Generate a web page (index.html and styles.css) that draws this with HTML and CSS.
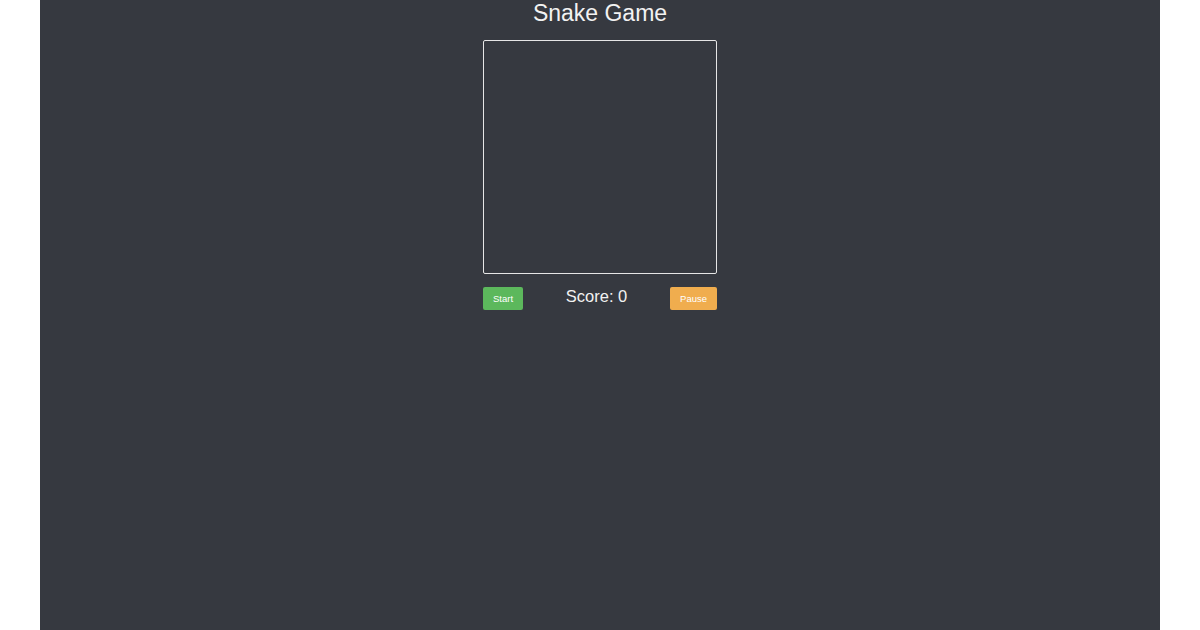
FILE: index.html
```html
<!DOCTYPE html>
<html lang="en">
<head>
  <title>Snake Game</title>
  <meta charset="UTF-8">
  <link rel="stylesheet" href="styles.css">
</head>
<body>
  <div class="game">
    <h1 class="game-title">Snake Game</h1>
    <div class="board">
      <canvas id="board" width="232" height="232"></canvas>
      <div class="controls">
        <button id="startButton" class="btn btn-start">Start</button>
        <span class="score">Score: <span id="score">0</span></span>
        <button id="pauseButton" class="btn btn-pause">Pause</button>
      </div>
    </div>
  </div>
</body>
</html>
```

FILE: styles.css
```css
body {
  margin: 0;
  background-color: #fff;
  font-family: "Liberation Sans", Arial, sans-serif;
}

.game {
  margin: 0 40px;
  min-height: 100vh;
  background-color: #363940;
  display: flex;
  flex-direction: column;
  align-items: center;
}

.game-title {
  margin: 0;
  font-size: 23px;
  font-weight: normal;
  line-height: 26px;
  color: #f2f2f2;
}

.board {
  margin-top: 14px;
  width: 234px;
}

#board {
  display: block;
  border: 1px solid #e6e6e6;
  border-radius: 2px;
}

.controls {
  margin-top: 13px;
  display: flex;
  justify-content: space-between;
  align-items: flex-start;
}

.score {
  font-size: 16.5px;
  line-height: 18px;
  color: #f2f2f2;
}

.btn {
  height: 23px;
  padding: 0 10px;
  border: none;
  border-radius: 2px;
  color: #fff;
  font-family: "Liberation Sans", Arial, sans-serif;
  font-size: 9.5px;
  cursor: pointer;
}

.btn-start {
  background-color: #5cb85c;
}

.btn-pause {
  background-color: #f0ad4e;
}
```
